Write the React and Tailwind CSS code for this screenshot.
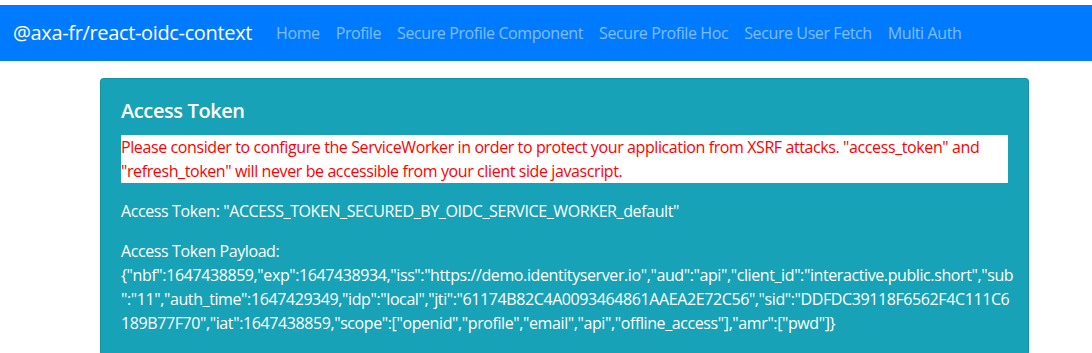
import React from 'react';

const LINKS = ['Home', 'Profile', 'Secure Profile Component', 'Secure Profile Hoc', 'Secure User Fetch', 'Multi Auth'];

// payload lines are split where the browser wrapped them in the screenshot
const PAYLOAD = [
  '{"nbf":1647438859,"exp":1647438934,"iss":"https://demo.identityserver.io","aud":"api","client_id":"interactive.public.short","sub',
  '":"11","auth_time":1647429349,"idp":"local","jti":"61174B82C4A0093464861AAEA2E72C56","sid":"DDFDC39118F6562F4C111C6',
  '189B77F70","iat":1647438859,"scope":["openid","profile","email","api","offline_access"],"amr":["pwd"]}',
];

const App = () => {
  return (
    <div className="min-h-[353px] bg-white pt-[5px] font-['Open_Sans',sans-serif] text-[16px] leading-6 tracking-[-0.4px] text-white">
      <nav className="flex h-14 items-center bg-[#007bff] pl-[13px]">
        <a className="mr-4 text-[20px] leading-[30px] tracking-[-0.35px] text-white">@axa-fr/react-oidc-context</a>
        <ul className="flex">
          {LINKS.map((l) => (
            <li key={l} className="px-2 text-white/50">
              {l}
            </li>
          ))}
        </ul>
      </nav>

      <div className="ml-[100px] mt-[17px] w-[929px] rounded border border-black/10 bg-[#17a2b8]">
        <div className="p-5">
          <h5 className="mb-3 text-[20px] font-semibold leading-6">Access Token</h5>
          <p className="mb-4 bg-white text-[#ff0000]">
            Please consider to configure the ServiceWorker in order to protect your application from XSRF attacks.
            "access_token" and "refresh_token" will never be accessible from your client side javascript.
          </p>
          <p className="mb-4">Access Token: "ACCESS_TOKEN_SECURED_BY_OIDC_SERVICE_WORKER_default"</p>
          <p>
            Access Token Payload:
            {PAYLOAD.map((line, i) => (
              <span key={i} className="block whitespace-nowrap">
                {line}
              </span>
            ))}
          </p>
        </div>
      </div>
    </div>
  );
};

export default App;
